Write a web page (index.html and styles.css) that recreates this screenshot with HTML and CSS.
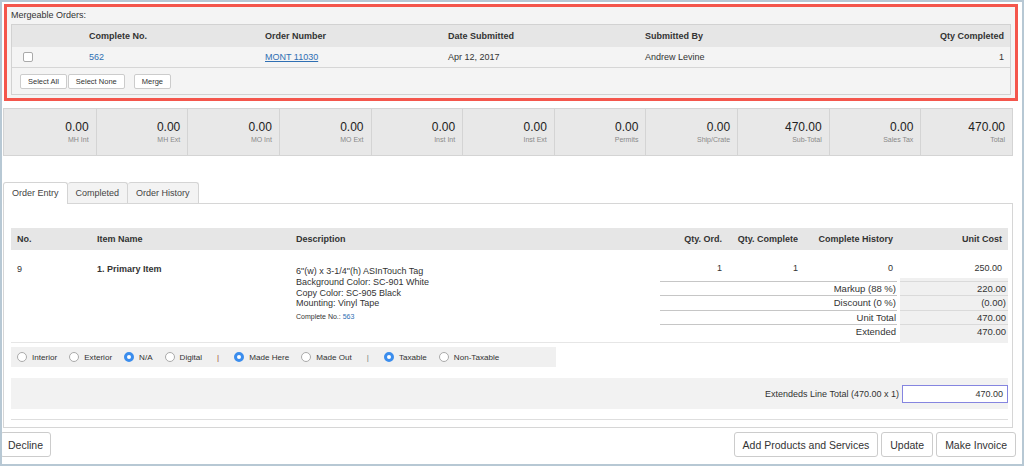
FILE: index.html
```html
<!DOCTYPE html>
<html lang="en">

<head>
  <meta charset="UTF-8">
  <meta name="viewport" content="width=device-width, initial-scale=1.0">
  <title>Order Entry</title>
  <link rel="stylesheet" href="styles.css">
</head>

<body>
  <div class="frame">
    <!-- mergeable orders panel -->
    <section class="merge">
      <div class="merge-title">Mergeable Orders:</div>
      <div class="merge-box">
        <div class="merge-row merge-head">
          <span></span>
          <span>Complete No.</span>
          <span>Order Number</span>
          <span>Date Submitted</span>
          <span>Submitted By</span>
          <span class="num">Qty Completed</span>
        </div>
        <div class="merge-row">
          <span class="check-cell"><span class="checkbox"></span></span>
          <span><a class="link" href="#">562</a></span>
          <span><a class="link underline" href="#">MONT 11030</a></span>
          <span>Apr 12, 2017</span>
          <span>Andrew Levine</span>
          <span class="num">1</span>
        </div>
        <div class="merge-actions">
          <button class="btn-sm">Select All</button>
          <button class="btn-sm">Select None</button>
          <button class="btn-sm btn-apart">Merge</button>
        </div>
      </div>
    </section>

    <!-- totals strip -->
    <div class="totals">
      <div class="total"><div class="total-value">0.00</div><div class="total-label">MH Int</div></div>
      <div class="total"><div class="total-value">0.00</div><div class="total-label">MH Ext</div></div>
      <div class="total"><div class="total-value">0.00</div><div class="total-label">MO Int</div></div>
      <div class="total"><div class="total-value">0.00</div><div class="total-label">MO Ext</div></div>
      <div class="total"><div class="total-value">0.00</div><div class="total-label">Inst Int</div></div>
      <div class="total"><div class="total-value">0.00</div><div class="total-label">Inst Ext</div></div>
      <div class="total"><div class="total-value">0.00</div><div class="total-label">Permits</div></div>
      <div class="total"><div class="total-value">0.00</div><div class="total-label">Ship/Crate</div></div>
      <div class="total"><div class="total-value">470.00</div><div class="total-label">Sub-Total</div></div>
      <div class="total"><div class="total-value">0.00</div><div class="total-label">Sales Tax</div></div>
      <div class="total"><div class="total-value">470.00</div><div class="total-label">Total</div></div>
    </div>

    <!-- tabs -->
    <div class="tabs">
      <span class="tab active">Order Entry</span>
      <span class="tab">Completed</span>
      <span class="tab">Order History</span>
    </div>

    <div class="tab-panel">
      <div class="items">
        <div class="head">No.</div>
        <div class="head">Item Name</div>
        <div class="head">Description</div>
        <div class="head num">Qty. Ord.</div>
        <div class="head num">Qty. Complete</div>
        <div class="head num">Complete History</div>
        <div class="head num">Unit Cost</div>

        <div class="cell span2">9</div>
        <div class="cell span2 bold">1. Primary Item</div>
        <div class="desc span2">
          <div>6"(w) x 3-1/4"(h) ASInTouch Tag</div>
          <div>Background Color: SC-901 White</div>
          <div>Copy Color: SC-905 Black</div>
          <div>Mounting: Vinyl Tape</div>
          <div class="desc-note">Complete No.: <a class="link" href="#">563</a></div>
        </div>
        <div class="qty num">1</div>
        <div class="qty num">1</div>
        <div class="qty num">0</div>
        <div class="qty num">250.00</div>

        <div class="summary">
          <div class="sum-labels">
            <div class="sum-row">Markup (88 %)</div>
            <div class="sum-row">Discount (0 %)</div>
            <div class="sum-row">Unit Total</div>
            <div class="sum-row">Extended</div>
          </div>
          <div class="sum-values">
            <div class="sum-row">220.00</div>
            <div class="sum-row">(0.00)</div>
            <div class="sum-row">470.00</div>
            <div class="sum-row">470.00</div>
          </div>
        </div>
      </div>

      <div class="options">
        <span class="radio"></span><span class="opt">Interior</span>
        <span class="radio"></span><span class="opt">Exterior</span>
        <span class="radio on"></span><span class="opt">N/A</span>
        <span class="radio"></span><span class="opt">Digital</span>
        <span class="sep">|</span>
        <span class="radio on"></span><span class="opt">Made Here</span>
        <span class="radio"></span><span class="opt">Made Out</span>
        <span class="sep grey">|</span>
        <span class="radio on"></span><span class="opt">Taxable</span>
        <span class="radio"></span><span class="opt last">Non-Taxable</span>
      </div>

      <div class="line-total">
        <span>Extendeds Line Total (470.00 x 1)</span>
        <span class="line-input">470.00</span>
      </div>

      <div class="rule"></div>
    </div>

    <div class="footer">
      <button class="btn btn-decline">Decline</button>
      <div class="footer-right">
        <button class="btn">Add Products and Services</button>
        <button class="btn">Update</button>
        <button class="btn">Make Invoice</button>
      </div>
    </div>
  </div>
</body>

</html>
```

FILE: styles.css
```css
html,
body {
  margin: 0;
  padding: 0;
  background: #fff;
}

body {
  font-family: "Liberation Sans", Arial, Helvetica, sans-serif;
  font-size: 9px;
  color: #333;
}

.frame {
  box-sizing: border-box;
  width: 1024px;
  height: 466px;
  border: 2px solid #b7c8d4;
  overflow: hidden;
}

.link {
  color: #2f6fb3;
  text-decoration: none;
}

.underline {
  text-decoration: underline;
}

.num {
  text-align: right;
}

.bold {
  font-weight: bold;
}

/* mergeable orders */
.merge {
  margin: 2px 4px 0 2px;
  border: 3px solid #f4564c;
  background: #f4f4f4;
  padding: 0 4px 3px;
}

.merge-title {
  height: 17px;
  line-height: 17px;
}

.merge-box {
  border: 1px solid #d2d2d2;
}

.merge-row {
  display: grid;
  grid-template-columns: 77px 176px 183px 197px 1fr 120px;
  align-items: center;
  height: 20px;
}

.merge-row .num {
  padding-right: 6px;
}

.merge-head {
  height: 22px;
  background: #e6e6e6;
  font-weight: bold;
}

.check-cell {
  display: flex;
  padding-left: 11px;
}

.checkbox {
  width: 8px;
  height: 8px;
  border: 1px solid #aaa;
  border-radius: 2px;
  background: #fff;
}

.merge-actions {
  display: flex;
  align-items: center;
  height: 26px;
  padding-left: 8px;
  border-top: 1px solid #d6d6d6;
}

.btn-sm {
  height: 15px;
  padding: 0 7px;
  margin-right: 1px;
  border: 1px solid #ccc;
  border-radius: 2px;
  background: #fff;
  font-family: inherit;
  font-size: 7.5px;
  color: #333;
}

.btn-apart {
  margin-left: 8px;
}

/* totals strip */
.totals {
  display: grid;
  grid-template-columns: repeat(11, 1fr);
  margin: 7px 9px 0 1px;
  border: 1px solid #d4d4d4;
  background: #e8e8e8;
  height: 46px;
}

.total {
  border-left: 1px solid #d4d4d4;
  padding: 11px 7px 0 0;
  text-align: right;
}

.total:first-child {
  border-left: none;
}

.total-value {
  font-size: 12px;
  line-height: 14px;
  color: #222;
}

.total-label {
  margin-top: 1px;
  font-size: 7px;
  line-height: 9px;
  color: #888;
}

/* tabs */
.tabs {
  display: flex;
  margin: 26px 0 0 1px;
  height: 21px;
}

.tab {
  box-sizing: border-box;
  height: 21px;
  padding: 0 8px;
  line-height: 20px;
  font-size: 9px;
  color: #444;
  background: #f3f3f3;
  border: 1px solid #d4d4d4;
  border-bottom: none;
  border-left: none;
  border-radius: 3px 3px 0 0;
}

.tab:first-child {
  border-left: 1px solid #d4d4d4;
}

.tab.active {
  background: #fff;
  position: relative;
  height: 22px;
  margin-bottom: -1px;
  z-index: 1;
}

.tab-panel {
  margin: 0 9px 0 1px;
  border: 1px solid #d6d6d6;
  padding: 24px 4px 7px 7px;
}

/* item table */
.items {
  display: grid;
  grid-template-columns: 80px 199px 370px 68px 76px 95px 1fr;
  grid-template-rows: 22px 28px 64px;
  border-bottom: 1px solid #e6e6e6;
}

.head {
  background: #e6e6e6;
  font-weight: bold;
  line-height: 22px;
  padding: 0 6px;
}

.cell {
  padding: 14px 6px 0;
  line-height: 11px;
}

.span2 {
  grid-row: span 2;
}

.desc {
  padding: 16px 6px 0;
  line-height: 10.8px;
}

.desc-note {
  margin-top: 3px;
  font-size: 7px;
  line-height: 10px;
}

.qty {
  padding: 13px 6px 0;
  line-height: 11px;
}

.summary {
  grid-column: 4 / 8;
  display: flex;
  gap: 3px;
}

.sum-labels {
  width: 237px;
  padding-top: 3px;
}

.sum-values {
  flex: 1;
  padding-top: 3px;
  background: #f0f0f0;
  margin-bottom: -1px;
}

.sum-row {
  border-top: 1px solid #c6c6c6;
  line-height: 13.3px;
  text-align: right;
  padding-right: 1px;
  font-size: 9.5px;
}

.sum-values .sum-row {
  border-top-color: #dadada;
  padding-right: 2px;
}

/* option radios */
.options {
  display: flex;
  align-items: center;
  width: fit-content;
  height: 20px;
  margin-top: 4px;
  padding: 0 57px 0 6px;
  background: #f0f0f0;
  font-size: 8.1px;
}

.radio {
  box-sizing: border-box;
  width: 10px;
  height: 10px;
  border: 1px solid #aaa;
  border-radius: 50%;
  background: #fff;
  margin-right: 5px;
}

.radio.on {
  border: 3.5px solid #3b8ded;
  background: #fff;
}

.opt {
  margin-right: 12px;
}

.opt.last {
  margin-right: 0;
}

.sep {
  color: #9c4a33;
  margin: 0 15px 0 3px;
}

.sep.grey {
  color: #777;
}

.line-total {
  display: flex;
  justify-content: flex-end;
  align-items: center;
  gap: 3px;
  height: 31px;
  margin-top: 11px;
  background: #f2f2f2;
}

.line-input {
  box-sizing: border-box;
  width: 106px;
  height: 18px;
  line-height: 16px;
  padding-right: 4px;
  text-align: right;
  background: #fff;
  border: 1px solid #8585e0;
}

.rule {
  height: 1px;
  margin-top: 10px;
  background: #dedede;
}

/* footer buttons */
.footer {
  display: flex;
  justify-content: space-between;
  margin: 4px 6px 0 0;
}

.footer-right {
  display: flex;
  gap: 3px;
}

.btn {
  height: 25px;
  padding: 0 8px;
  border: 1px solid #ccc;
  border-radius: 3px;
  background: #fff;
  font-family: inherit;
  font-size: 10.5px;
  color: #333;
}

.btn-decline {
  margin-left: -2px;
  padding: 0 7px;
}
```
